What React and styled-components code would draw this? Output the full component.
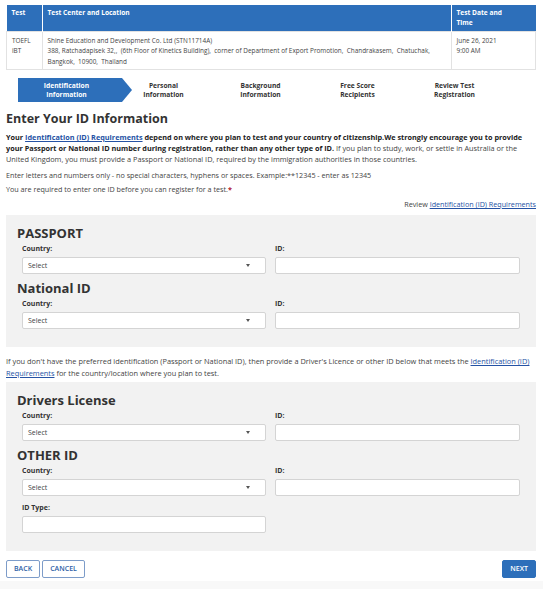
import styled, { createGlobalStyle } from "styled-components";

const GlobalStyle = createGlobalStyle`
  body {
    margin: 0;
    background: #fff;
    font-family: "Open Sans", "Liberation Sans", sans-serif;
    color: #333;
  }
`;

const Page = styled.div`
  padding: 5px 7px 0 6px;
`;

const Table = styled.table`
  width: 100%;
  border-collapse: collapse;

  th {
    background: #2d6fba;
    color: #fff;
    font-size: 6.6px;
    line-height: 10px;
    font-weight: 700;
    text-align: left;
    vertical-align: top;
    padding: 3px 5px 3px;
    border-right: 1px solid #fff;
  }
  th:last-child { border-right: none; }

  td {
    vertical-align: top;
    font-size: 6.4px;
    line-height: 10.3px;
    padding: 4px 5px 2px;
    border: 1px solid #e2e2e2;
    color: #444;
  }
`;

const Stepper = styled.div`
  display: flex;
  margin: 8px 0 0 12px;
`;

const Step = styled.div`
  position: relative;
  width: 97px;
  height: 24px;
  display: flex;
  align-items: center;
  justify-content: center;
  text-align: center;
  font-size: 6.7px;
  line-height: 9px;
  font-weight: 700;
  color: ${(p) => (p.$active ? "#fff" : "#333")};

  &::before {
    content: "";
    display: ${(p) => (p.$active ? "block" : "none")};
    position: absolute;
    left: 0;
    top: 0;
    bottom: 0;
    width: 114px;
    background: #2d6fba;
    clip-path: polygon(0 0, 104px 0, 114px 50%, 104px 100%, 0 100%);
  }

  span {
    position: relative;
  }
`;

const Title = styled.h1`
  margin: 9px 0 5px;
  font-size: 12.5px;
  line-height: 16px;
  font-weight: 700;
  color: #333;
`;

const Para = styled.p`
  margin: ${(p) => p.$top || 0}px 0 ${(p) => p.$gap || 5}px;
  font-size: ${(p) => p.$size || 7.2}px;
  line-height: ${(p) => p.$lh || 11}px;
  color: #444;
  text-align: ${(p) => p.$align || "left"};

  b {
    color: #222;
    font-size: 7.3px;
  }
`;

const Link = styled.a`
  color: #2552a4;
  text-decoration: underline;
`;

const Req = styled.span`
  color: #b0132b;
  font-weight: 700;
`;

const Panel = styled.section`
  background: #f2f2f2;
  padding: 9px 16px 13px 16px;
  margin-top: ${(p) => p.$top || 0}px;
`;

const Heading = styled.h2`
  margin: 0 0 2px -5px;
  font-size: 13px;
  line-height: 18px;
  font-weight: 700;
  color: #333;
`;

const Row = styled.div`
  display: grid;
  grid-template-columns: 244px 245px;
  column-gap: 9px;
  margin-bottom: ${(p) => p.$mb || 5}px;
`;

const Field = styled.div`
  display: flex;
  flex-direction: column;
`;

const Label = styled.label`
  font-size: 7px;
  line-height: 9px;
  font-weight: 700;
  color: #333;
  margin-bottom: 4px;
`;

const Box = styled.div`
  box-sizing: border-box;
  height: 17px;
  background: #fff;
  border: 1px solid #d4d4d4;
  border-radius: 2px;
  display: flex;
  align-items: center;
  justify-content: space-between;
  padding: 0 15px 0 5px;
  font-size: 7px;
  color: #444;
`;

const Caret = styled.span`
  width: 0;
  height: 0;
  border-left: 2px solid transparent;
  border-right: 2px solid transparent;
  border-top: 3px solid #555;
`;

const Actions = styled.div`
  display: flex;
  align-items: center;
  gap: 2px;
  padding: 9px 0 3px;
`;

const Button = styled.button`
  box-sizing: border-box;
  height: 18px;
  padding: 0 7px;
  border: 1px solid ${(p) => (p.$primary ? "#2d6fba" : "#7d9cc9")};
  border-radius: 2px;
  background: ${(p) => (p.$primary ? "#2d6fba" : "#fff")};
  color: ${(p) => (p.$primary ? "#fff" : "#2d5ea6")};
  font-family: inherit;
  font-size: 7px;
  font-weight: 600;
  margin-left: ${(p) => (p.$push ? "auto" : "0")};
`;

const Footer = styled.div`
  height: 8px;
  background: #f8f8f8;
`;

function Select() {
  return (
    <Box>
      <span>Select</span>
      <Caret />
    </Box>
  );
}

function IdGroup({ title, withType }) {
  return (
    <>
      <Heading>{title}</Heading>
      <Row $mb={withType ? 7 : 5}>
        <Field>
          <Label>Country:</Label>
          <Select />
        </Field>
        <Field>
          <Label>ID:</Label>
          <Box />
        </Field>
      </Row>
      {withType && (
        <Row>
          <Field>
            <Label>ID Type:</Label>
            <Box />
          </Field>
        </Row>
      )}
    </>
  );
}

export default function App() {
  const steps = [
    ["Identification", "Information"],
    ["Personal", "Information"],
    ["Background", "Information"],
    ["Free Score", "Recipients"],
    ["Review Test", "Registration"],
  ];

  return (
    <>
      <GlobalStyle />
      <Page>
        <Table>
          <thead>
            <tr>
              <th style={{ width: 25 }}>Test</th>
              <th>Test Center and Location</th>
              <th style={{ width: 74 }}>
                Test Date and
                <br />
                Time
              </th>
            </tr>
          </thead>
          <tbody>
            <tr>
              <td>TOEFL iBT</td>
              <td>
                Shine Education and Development Co. Ltd (STN11714A)
                <br />
                388, Ratchadapisek 32,,&nbsp; (6th Floor of Kinetics Building),&nbsp; corner of Department of Export Promotion,&nbsp; Chandrakasem,&nbsp; Chatuchak,
                <br />
                Bangkok,&nbsp; 10900,&nbsp; Thailand
              </td>
              <td>
                June 26, 2021
                <br />
                9:00 AM
              </td>
            </tr>
          </tbody>
        </Table>

        <Stepper>
          {steps.map(([a, b], i) => (
            <Step key={a} $active={i === 0}>
              <span>
                {a}
                <br />
                {b}
              </span>
            </Step>
          ))}
        </Stepper>

        <Title>Enter Your ID Information</Title>
        <Para $gap={5} $size={7.35}>
          <b>
            Your <Link href="#">Identification (ID) Requirements</Link> depend on where you plan to test and your country of citizenship.We strongly encourage you to provide your Passport or National ID number during registration, rather than any other type of ID.
          </b>{" "}
          If you plan to study, work, or settle in Australia or the United Kingdom, you must provide a Passport or National ID, required by the immigration authorities in those countries.
        </Para>
        <Para $gap={3}>Enter letters and numbers only - no special characters, hyphens or spaces. Example:**12345 - enter as 12345</Para>
        <Para $gap={4}>
          You are required to enter one ID before you can register for a test.<Req>*</Req>
        </Para>
        <Para $align="right" $gap={0}>
          Review <Link href="#">Identification (ID) Requirements</Link>
        </Para>

        <Panel $top={3}>
          <IdGroup title="PASSPORT" />
          <IdGroup title="National ID" />
        </Panel>

        <Para $top={8} $gap={3} $size={7.4} $lh={12}>
          If you don't have the preferred identification (Passport or National ID), then provide a Driver's Licence or other ID below that meets the <Link href="#">Identification (ID) Requirements</Link> for the country/location where you plan to test.
        </Para>

        <Panel>
          <IdGroup title="Drivers License" />
          <IdGroup title="OTHER ID" withType />
        </Panel>

        <Actions>
          <Button>BACK</Button>
          <Button>CANCEL</Button>
          <Button $primary $push>NEXT</Button>
        </Actions>
      </Page>
      <Footer />
    </>
  );
}
